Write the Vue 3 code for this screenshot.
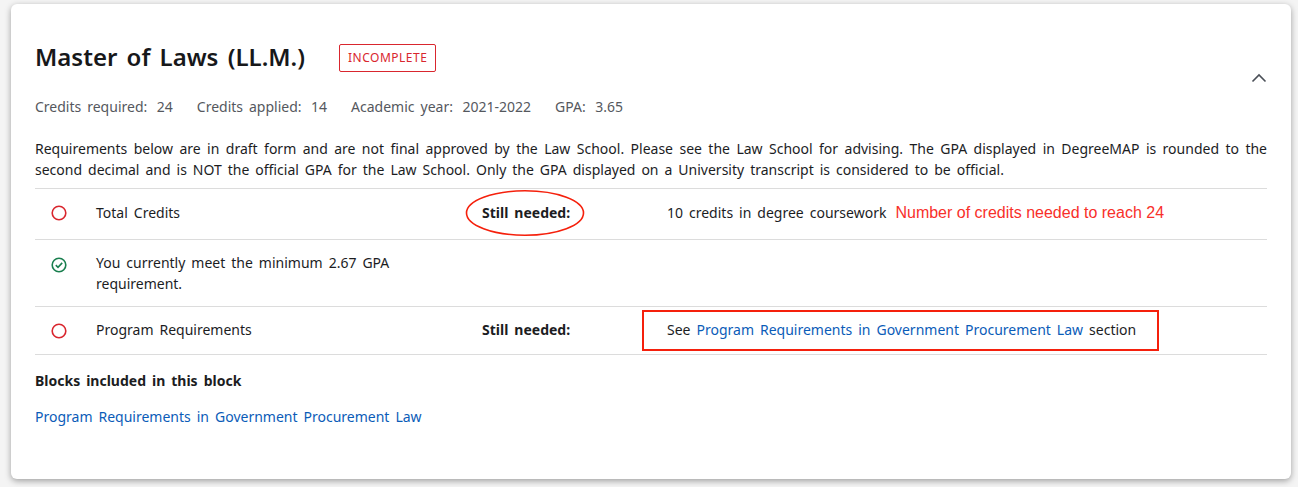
<script setup>
const stats = [
  { label: 'Credits required:', value: '24' },
  { label: 'Credits applied:', value: '14' },
  { label: 'Academic year:', value: '2021-2022' },
  { label: 'GPA:', value: '3.65' }
]
</script>

<template>
  <div class="page">
    <section class="card">
      <div class="head">
        <div class="title-row">
          <h1>Master of Laws (LL.M.)</h1>
          <span class="badge">INCOMPLETE</span>
        </div>
        <svg class="chevron" width="16" height="10" viewBox="0 0 16 10" fill="none">
          <path d="M1.5 8.5 8 2l6.5 6.5" stroke="#4a4f57" stroke-width="1.6" />
        </svg>
      </div>

      <div class="stats">
        <span v-for="s in stats" :key="s.label">{{ s.label }}<span class="stat-value">{{ s.value }}</span></span>
      </div>

      <p class="note">
        Requirements below are in draft form and are not final approved by the Law School. Please see the Law School for advising. The GPA displayed in DegreeMAP is rounded to the second decimal and is NOT the official GPA for the Law School. Only the GPA displayed on a University transcript is considered to be official.
      </p>

      <div class="row row-first">
        <svg class="status" width="16" height="16" viewBox="0 0 16 16" fill="none">
          <circle cx="8" cy="8" r="6.8" stroke="#d9262e" stroke-width="1.6" />
        </svg>
        <div class="name">Total Credits</div>
        <div class="needed">
          <strong>Still needed:</strong>
          <svg class="ellipse" width="120" height="46" viewBox="0 0 120 46" fill="none">
            <ellipse cx="60" cy="23" rx="58.5" ry="22.2" stroke="#f5200c" stroke-width="1.6" />
          </svg>
        </div>
        <div class="value">
          10 credits in degree coursework
          <span class="remark">Number of credits needed to reach 24</span>
        </div>
      </div>

      <div class="row row-met">
        <svg class="status" width="16" height="16" viewBox="0 0 16 16" fill="none">
          <circle cx="8" cy="8" r="6.8" stroke="#1a7f4f" stroke-width="1.6" />
          <path d="M4.8 8.2 7 10.3l4.2-4.4" stroke="#1a7f4f" stroke-width="1.6" />
        </svg>
        <div class="name">You currently meet the minimum 2.67 GPA requirement.</div>
      </div>

      <div class="row row-last">
        <svg class="status" width="16" height="16" viewBox="0 0 16 16" fill="none">
          <circle cx="8" cy="8" r="6.8" stroke="#d9262e" stroke-width="1.6" />
        </svg>
        <div class="name">Program Requirements</div>
        <div class="needed"><strong>Still needed:</strong></div>
        <div class="value">
          See <a href="#">Program Requirements in Government Procurement Law</a> section
          <span class="box"></span>
        </div>
      </div>

      <h2>Blocks included in this block</h2>
      <a class="block-link" href="#">Program Requirements in Government Procurement Law</a>
    </section>
  </div>
</template>

<style>
html,
body {
  margin: 0;
  background: #f4f4f4;
}
</style>

<style scoped>
.page {
  height: 487px;
  padding: 4px 7px 8px 11px;
  box-sizing: border-box;
  overflow: hidden;
  font-family: "Noto Sans", sans-serif;
  font-size: 14px;
  color: #1c1d1f;
  word-spacing: 2.35px;
}

.card {
  height: 475px;
  box-sizing: border-box;
  padding: 37px 24px 0;
  background: #fff;
  border-radius: 6px;
  box-shadow: 0 2px 6px rgba(0, 0, 0, 0.35);
}

.head {
  display: flex;
  justify-content: space-between;
}

.title-row {
  display: flex;
  align-items: center;
  gap: 34px;
  height: 34px;
}

h1 {
  margin: -2px 0 0;
  font-size: 24px;
  font-weight: 600;
  line-height: 34px;
  word-spacing: 3px;
  color: #17181a;
}

.badge {
  padding: 0 8px;
  line-height: 26px;
  border: 1px solid #d9262e;
  border-radius: 2px;
  font-size: 12px;
  letter-spacing: 0.5px;
  color: #d9262e;
}

.chevron {
  margin-top: 32px;
}

.stats {
  display: flex;
  gap: 24px;
  margin-top: 13px;
  line-height: 22px;
  color: #55585e;
}

.stat-value {
  margin-left: 9.5px;
}

.note {
  margin: 20px 0 0;
  line-height: 21px;
  text-align: justify;
  color: #1c1d1f;
}

.row {
  display: grid;
  grid-template-columns: 61px 386px 185px 1fr;
  align-items: center;
  border-bottom: 1px solid #dcdcdc;
  line-height: 21px;
  box-sizing: border-box;
}

.row-first {
  height: 52px;
  margin-top: 8px;
  padding-bottom: 4px;
  border-top: 1px solid #dcdcdc;
}

.row-met {
  height: 67px;
}

.row-last {
  height: 48px;
  padding-bottom: 2px;
}

.status {
  margin: 2px 0 0 16px;
}

.row-met .status {
  align-self: start;
  margin-top: 17px;
}

.row-met .name {
  width: 310px;
}

.needed,
.value {
  position: relative;
}

.needed strong {
  font-weight: 700;
}

.ellipse {
  position: absolute;
  left: -17px;
  top: -12px;
}

.remark {
  margin-left: 3px;
  font-family: "Liberation Sans", sans-serif;
  font-size: 16px;
  word-spacing: 0;
  color: #f8302a;
}

.box {
  position: absolute;
  left: -25px;
  top: -9px;
  width: 517px;
  height: 41px;
  box-sizing: border-box;
  border: 2px solid #f5200c;
}

a {
  color: #0b5cb8;
  text-decoration: none;
}

h2 {
  margin: 15px 0 0;
  font-size: 14px;
  font-weight: 700;
  line-height: 21px;
}

.block-link {
  display: block;
  margin-top: 15px;
  line-height: 21px;
}
</style>
